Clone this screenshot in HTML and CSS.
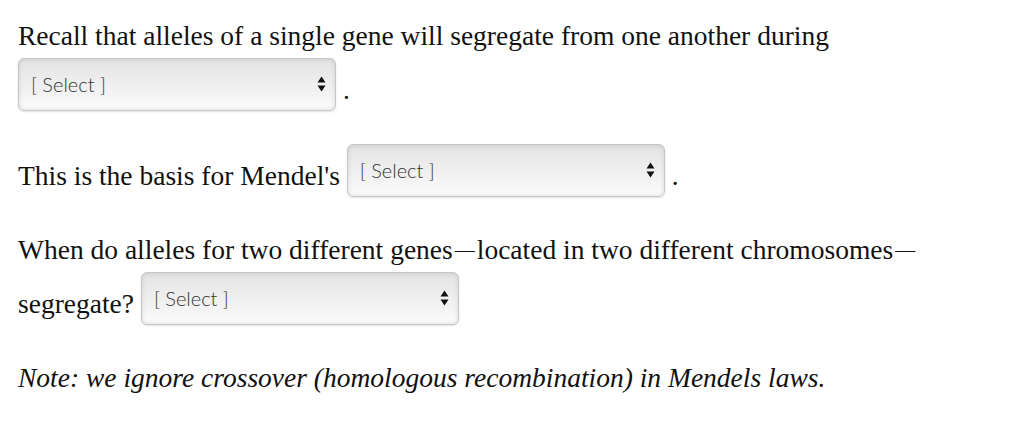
FILE: index.html
```html
<!DOCTYPE html>
<html lang="en">
<head>
<meta charset="utf-8">
<title>Quiz question</title>
<link rel="stylesheet" href="styles.css">
</head>
<body>
<div class="question">
  <p class="para p1">Recall that alleles of a single gene will segregate from one another during
    <span class="dd"><select class="sel" aria-label="Answer 1"><option>[ Select ]</option><option>meiosis</option><option>mitosis</option></select><svg class="arrows" width="9" height="16" viewBox="0 0 9 16" aria-hidden="true"><path d="M4.5 0.5 L8.5 6.5 L0.5 6.5 Z M0.5 9.5 L8.5 9.5 L4.5 15.5 Z" fill="#111"/></svg></span> .</p>
  <p class="para p2">This is the basis for Mendel's <span class="dd"><select class="sel" aria-label="Answer 2"><option>[ Select ]</option><option>Law of Segregation</option><option>Law of Independent Assortment</option></select><svg class="arrows" width="9" height="16" viewBox="0 0 9 16" aria-hidden="true"><path d="M4.5 0.5 L8.5 6.5 L0.5 6.5 Z M0.5 9.5 L8.5 9.5 L4.5 15.5 Z" fill="#111"/></svg></span> .</p>
  <p class="para p3">When do alleles for two different genes<span class="dash">—</span>located in two different chromosomes<span class="dash">—</span>segregate? <span class="dd"><select class="sel" aria-label="Answer 3"><option>[ Select ]</option><option>independently</option><option>together</option></select><svg class="arrows" width="9" height="16" viewBox="0 0 9 16" aria-hidden="true"><path d="M4.5 0.5 L8.5 6.5 L0.5 6.5 Z M0.5 9.5 L8.5 9.5 L4.5 15.5 Z" fill="#111"/></svg></span></p>
  <p class="para note"><em>Note: we ignore crossover (homologous recombination) in Mendels laws.</em></p>
</div>
</body>
</html>
```
FILE: styles.css
```css
html, body {
  margin: 0;
  padding: 0;
  background: #ffffff;
}
.question {
  padding: 0 18px;
  font-family: "Liberation Serif", "Times New Roman", serif;
  font-size: 27.5px;
  line-height: 54px;
  color: #111;
}
.para {
  margin: 0;
}
.p1 {
  padding-top: 9px;
}
.p2 {
  margin-top: 32px;
}
.p3 {
  margin-top: 20px;
}
.note {
  margin-top: 20px;
}
.dash {
  font-size: 20px;
  margin: 0 2px;
  vertical-align: 2px;
  line-height: 1;
}
.dd {
  position: relative;
  display: inline-block;
  vertical-align: 7px;
  margin-top: -6px;
  line-height: normal;
}
.sel {
  -webkit-appearance: none;
  appearance: none;
  display: block;
  box-sizing: border-box;
  width: 318px;
  height: 53px;
  margin: 0;
  padding: 0 30px 0 12px;
  border: 1px solid #c6c6c6;
  border-radius: 6px;
  background: linear-gradient(#e3e3e3, #fbfbfb);
  box-shadow: inset 0 0 5px rgba(0, 0, 0, 0.12), 0 1px 2px rgba(0, 0, 0, 0.12);
  font-family: Lato, "Open Sans", sans-serif;
  font-weight: 300;
  font-size: 20px;
  color: #333;
}
.arrows {
  position: absolute;
  right: 10px;
  top: 18px;
  pointer-events: none;
}
```
